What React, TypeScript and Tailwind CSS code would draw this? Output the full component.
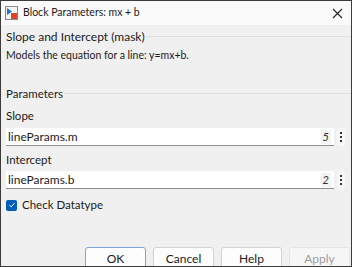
import React from "react";

function BlockIcon() {
  return (
    <svg width="13" height="14" viewBox="0 0 13 14">
      <rect x="0.5" y="0.5" width="12" height="13" fill="#f4f4f4" stroke="#8a8a8a" />
      <path d="M2 2 L7 5.5 L2 9 Z" fill="#1d73c9" />
      <rect x="6" y="7" width="6" height="6" fill="#d9452b" />
    </svg>
  );
}

function Kebab() {
  return (
    <div className="w-[8px] h-[18px] ml-[3px] flex flex-col items-center justify-center gap-[2px] bg-[#f7f7f7] rounded-[2px]">
      <span className="w-[2px] h-[2px] bg-[#333]" />
      <span className="w-[2px] h-[2px] bg-[#333]" />
      <span className="w-[2px] h-[2px] bg-[#333]" />
    </div>
  );
}

function ParamField({ value, count }: { value: string; count: string }) {
  return (
    <div className="flex items-center pr-[6px]">
      <div className="flex-1 h-[18px] bg-white border-b border-[#8d8d8d] flex items-center pl-[2px] pr-[3px]">
        <span className="text-[12px] leading-none">{value}</span>
        <span className="ml-auto text-[11px] italic text-[#333] bg-[#f3f3f3] px-[2px] leading-[14px]">
          {count}
        </span>
      </div>
      <Kebab />
    </div>
  );
}

function GroupTitle({ title, size }: { title: string; size: string }) {
  return (
    <div className="flex items-center h-[15px]">
      <span className={size + " leading-none pr-[1px]"}>{title}</span>
      <div className="flex-1 h-px bg-[#dedede]" />
    </div>
  );
}

export default function App() {
  const buttons = [
    { label: "OK", cls: "border-[#7aa7d8] bg-[#fdfdfd] text-[#1a1a1a]" },
    { label: "Cancel", cls: "border-[#d3d3d3] bg-[#fdfdfd] text-[#1a1a1a]" },
    { label: "Help", cls: "border-[#d3d3d3] bg-[#fdfdfd] text-[#1a1a1a]" },
    { label: "Apply", cls: "border-[#e6e6e6] bg-[#f6f6f6] text-[#9d9d9d]" },
  ];

  return (
    <div className="w-[352px] h-[267px] border border-[#3c3c3c] bg-[#f0f0f0] flex flex-col overflow-hidden font-['Lato',sans-serif] text-[#1b1b1b]">
      {/* title bar */}
      <div className="h-[24px] bg-[#fafafa] flex items-center pl-[4px] pr-[8px] shrink-0">
        <BlockIcon />
        <span className="ml-[5px] text-[10.5px]">Block Parameters: mx + b</span>
        <svg className="ml-auto" width="11" height="11" viewBox="0 0 11 11">
          <path d="M1 1 L10 10 M10 1 L1 10" stroke="#222" strokeWidth="1.1" />
        </svg>
      </div>

      <div className="pl-[5px] flex flex-col">
        <div className="mt-[4px]">
          <GroupTitle title="Slope and Intercept (mask)" size="text-[12px]" />
        </div>
        <div className="mt-[4px] h-[15px] flex items-center text-[10.5px]">
          Models the equation for a line: y=mx+b.
        </div>
      </div>

      <div className="mt-[16px] h-px bg-[#dedede]" />

      <div className="pl-[5px] flex flex-col">
        <div className="mt-[7px]">
          <GroupTitle title="Parameters" size="text-[11.5px]" />
        </div>
        <div className="mt-[7px] h-[15px] flex items-center text-[11.5px]">Slope</div>
        <div className="mt-[5px]">
          <ParamField value="lineParams.m" count="5" />
        </div>
        <div className="mt-[6px] h-[15px] flex items-center text-[11.5px]">Intercept</div>
        <div className="mt-[4px]">
          <ParamField value="lineParams.b" count="2" />
        </div>
        <div className="mt-[9px] h-[14px] flex items-center">
          <span className="w-[11px] h-[11px] rounded-[2px] bg-[#005fb8] flex items-center justify-center">
            <svg width="8" height="8" viewBox="0 0 8 8">
              <path d="M1.5 4.2 L3.2 5.8 L6.5 2.2" stroke="#fff" strokeWidth="1" fill="none" />
            </svg>
          </span>
          <span className="ml-[5px] text-[11.5px]">Check Datatype</span>
        </div>
      </div>

      <div className="mt-[5px] h-px bg-[#dedede]" />

      <div className="mt-[30px] flex justify-end gap-[7px] pr-[1px]">
        {buttons.map((b) => (
          <div
            key={b.label}
            className={[
              "w-[61px] h-[24px] border rounded-[3px] flex items-center justify-center text-[12px]",
              b.cls,
            ].join(" ")}
          >
            {b.label}
          </div>
        ))}
      </div>
    </div>
  );
}
